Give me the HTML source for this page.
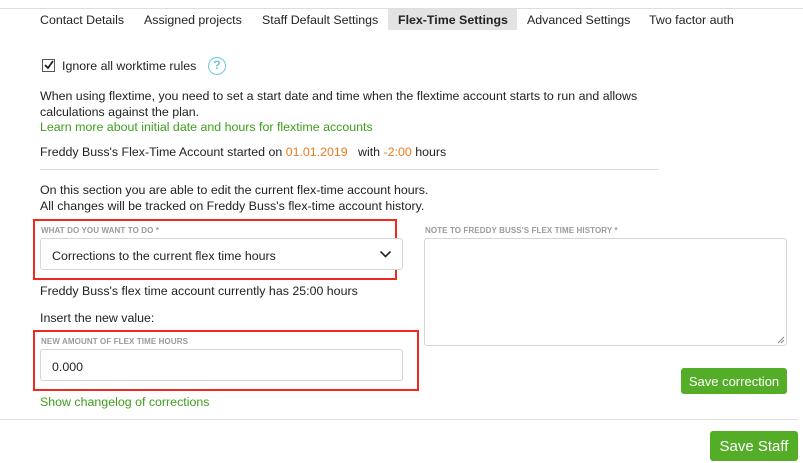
<!DOCTYPE html>
<html><head><meta charset="utf-8"><style>
*{box-sizing:border-box;margin:0;padding:0}
body{width:803px;height:448px;overflow:hidden;background:#fff;font-family:"Liberation Sans",sans-serif;color:#222;font-size:12.4px;position:relative}
.a{position:absolute;white-space:nowrap}
.g{color:#3e9e1c}
.o{color:#ec7a1a}
.lbl{font-size:8px;font-weight:bold;color:#9a9a9a;letter-spacing:.1px}
.box{position:absolute;border:1px solid #d6d6d6;border-radius:3px;background:#fff}
.red{position:absolute;border:2px solid #f0291e}
.btn{position:absolute;background:#53ad27;color:#fff;border-radius:3px;font-size:13px;text-align:center}
</style></head><body>
<div class="a" style="left:0;top:8px;width:803px;height:1px;background:#ddd"></div>
<div class="a" style="left:388px;top:9px;width:129px;height:21px;background:#e3e3e3"></div>
<div class="a" style="left:40px;top:13px">Contact Details</div>
<div class="a" style="left:144px;top:13px">Assigned projects</div>
<div class="a" style="left:262px;top:13px">Staff Default Settings</div>
<div class="a" style="left:398px;top:13px;font-weight:bold">Flex-Time Settings</div>
<div class="a" style="left:527px;top:13px">Advanced Settings</div>
<div class="a" style="left:649px;top:13px">Two factor auth</div>

<div class="a" style="left:42px;top:59px;width:13px;height:13px;border:1px solid #555;background:#fff"></div>
<svg class="a" style="left:43px;top:59px" width="12" height="12" viewBox="0 0 12 12"><path d="M2 6 L5 9 L10 2" fill="none" stroke="#222" stroke-width="1.8"/></svg>
<div class="a" style="left:62px;top:59px">Ignore all worktime rules</div>
<div class="a" style="left:208px;top:57px;width:18px;height:18px;border:1.5px solid #6cc9dd;border-radius:50%;color:#6cc9dd;font-weight:bold;font-size:12px;text-align:center;line-height:15px">?</div>

<div class="a" style="left:40px;top:88px;line-height:16px">When using flextime, you need to set a start date and time when the flextime account starts to run and allows<br>calculations against the plan.</div>
<div class="a g" style="left:40px;top:120px">Learn more about initial date and hours for flextime accounts</div>
<div class="a" style="left:40px;top:145px">Freddy Buss's Flex-Time Account started on <span class="o">01.01.2019</span> &nbsp;&nbsp;with <span class="o">-2:00</span> hours</div>
<div class="a" style="left:40px;top:169px;width:619px;height:1px;background:#ddd"></div>
<div class="a" style="left:40px;top:182px;line-height:16px">On this section you are able to edit the current flex-time account hours.<br>All changes will be tracked on Freddy Buss's flex-time account history.</div>

<div class="red" style="left:33px;top:219px;width:364px;height:61px"></div>
<div class="a lbl" style="left:41px;top:226px">WHAT DO YOU WANT TO DO *</div>
<div class="box" style="left:40px;top:238px;width:363px;height:32px"></div>
<div class="a" style="left:52px;top:249px">Corrections to the current flex time hours</div>
<svg class="a" style="left:379px;top:250px" width="13" height="9" viewBox="0 0 13 9"><path d="M1.5 1.5 L6.5 6.5 L11.5 1.5" fill="none" stroke="#222" stroke-width="1.6"/></svg>

<div class="a" style="left:40px;top:284px">Freddy Buss's flex time account currently has 25:00 hours</div>
<div class="a" style="left:40px;top:311px">Insert the new value:</div>

<div class="red" style="left:33px;top:330px;width:386px;height:61px"></div>
<div class="a lbl" style="left:41px;top:337px">NEW AMOUNT OF FLEX TIME HOURS</div>
<div class="box" style="left:40px;top:349px;width:363px;height:32px"></div>
<div class="a" style="left:52px;top:360px">0.000</div>
<div class="a g" style="left:40px;top:395px">Show changelog of corrections</div>

<div class="a lbl" style="left:425px;top:226px">NOTE TO FREDDY BUSS'S FLEX TIME HISTORY *</div>
<div class="box" style="left:424px;top:238px;width:363px;height:108px"></div>
<svg class="a" style="left:777px;top:336px" width="8" height="8" viewBox="0 0 8 8"><path d="M1 7 L7 1 M4 7 L7 4" stroke="#888" stroke-width="1"/></svg>
<div class="btn" style="left:681px;top:368px;width:106px;height:26px;line-height:27px">Save correction</div>

<div class="a" style="left:0;top:419px;width:798px;height:1px;background:#ddd"></div>
<div class="btn" style="left:710px;top:431px;width:88px;height:30px;line-height:32px;font-size:15px">Save Staff</div>
</body></html>
